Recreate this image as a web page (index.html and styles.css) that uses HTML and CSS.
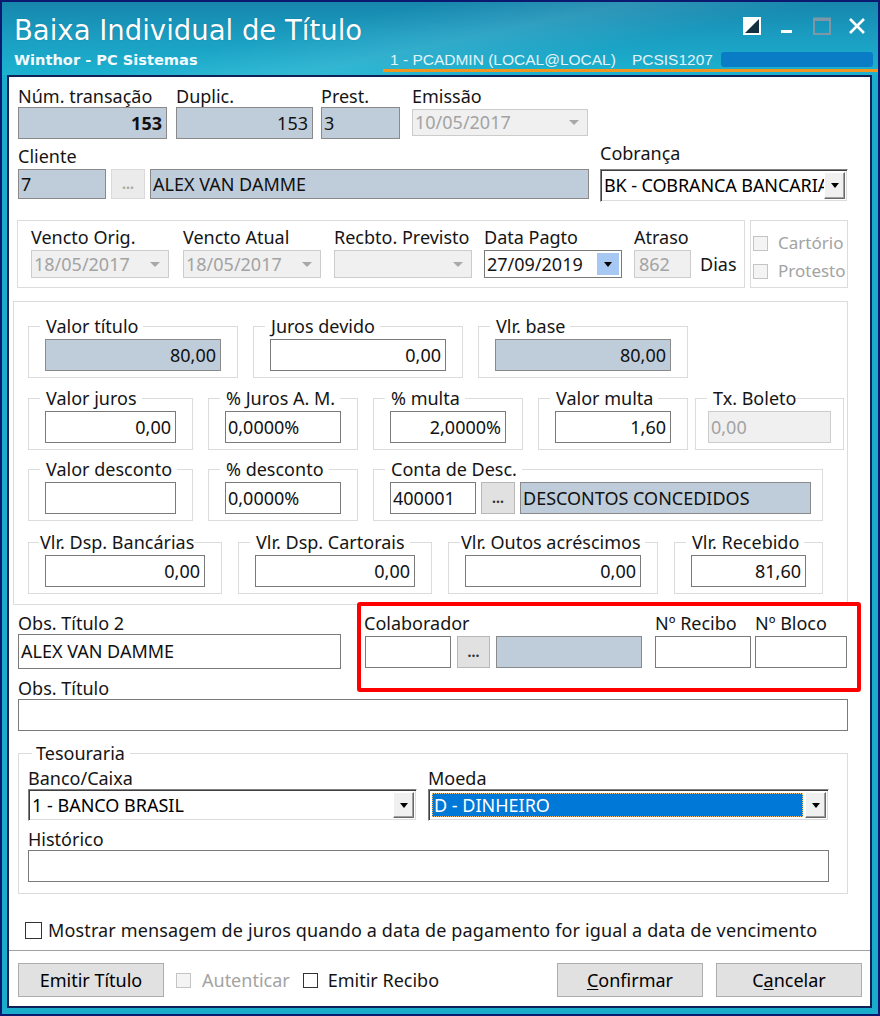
FILE: index.html
```html
<!DOCTYPE html>
<html lang="pt-BR">
<head>
<meta charset="utf-8">
<title>Baixa Individual de Título</title>
<link rel="stylesheet" href="styles.css">
</head>
<body>
<div class="win">
  <div class="titlebar">
    <div class="tb-left">
      <div class="tb-title">Baixa Individual de Título</div>
      <div class="tb-sub">Winthor - PC Sistemas</div>
    </div>
    <div class="tb-right">
      <div class="tb-icons">
        <svg class="ic" width="18" height="18" viewBox="0 0 18 18"><rect x="1" y="1" width="16" height="16" fill="#14303f" stroke="#fff" stroke-width="2"/><polygon points="1,1 17,1 1,17" fill="#fff"/></svg>
        <svg class="ic" width="18" height="18" viewBox="0 0 18 18"><rect x="3" y="13" width="11" height="3" fill="#fff"/></svg>
        <svg class="ic" width="18" height="18" viewBox="0 0 18 18"><rect x="1" y="1.5" width="16" height="15.5" fill="none" stroke="#7d97a6" stroke-width="2"/><rect x="1" y="1" width="16" height="3" fill="#7d97a6"/></svg>
        <svg class="ic" width="18" height="18" viewBox="0 0 18 18"><path d="M2 2 L16 16 M16 2 L2 16" stroke="#fff" stroke-width="2.6" fill="none"/></svg>
      </div>
      <div class="tb-user">
        <span class="u1">1 - PCADMIN (LOCAL@LOCAL)</span>
        <span class="u2">PCSIS1207</span>
        <span class="ubar"></span>
      </div>
    </div>
  </div>

  <div class="client">
    <div class="main">
      <div class="row r1">
        <div class="col f-trans"><div class="lbl">Núm. transação</div><div class="box ro rt bold">153</div></div>
        <div class="col f-dup"><div class="lbl">Duplic.</div><div class="box ro rt">153</div></div>
        <div class="col f-prest"><div class="lbl">Prest.</div><div class="box ro pl">3</div></div>
        <div class="col f-emis"><div class="lbl">Emissão</div><div class="cb dis emis"><span class="v">10/05/2017</span><span class="dd"><i class="arr g"></i></span></div></div>
      </div>

      <div class="row r2">
        <div class="col f-cli">
          <div class="lbl">Cliente</div>
          <div class="row cli-row">
            <div class="box ro cli-cod pl">7</div>
            <div class="dots dis cli-btn">...</div>
            <div class="box ro cli-nome pl">ALEX VAN DAMME</div>
          </div>
        </div>
        <div class="col f-cob">
          <div class="lbl">Cobrança</div>
          <div class="ccombo cob"><span class="v">BK - COBRANCA BANCARIA</span><span class="cbtn"><i class="arr"></i></span></div>
        </div>
      </div>

      <div class="row r3">
        <div class="vbox">
          <div class="col f-d1"><div class="lbl">Vencto Orig.</div><div class="cb dis"><span class="v">18/05/2017</span><span class="dd"><i class="arr g"></i></span></div></div>
          <div class="col f-d2"><div class="lbl">Vencto Atual</div><div class="cb dis"><span class="v">18/05/2017</span><span class="dd"><i class="arr g"></i></span></div></div>
          <div class="col f-d3"><div class="lbl">Recbto. Previsto</div><div class="cb dis"><span class="v"></span><span class="dd"><i class="arr g"></i></span></div></div>
          <div class="col f-d4"><div class="lbl">Data Pagto</div><div class="cb act"><span class="v">27/09/2019</span><span class="dd hot"><i class="arr"></i></span></div></div>
          <div class="col f-atr"><div class="lbl">Atraso</div><div class="box dis atr">862</div></div>
          <div class="dias">Dias</div>
        </div>
        <div class="ckbox">
          <div class="ck dis"><span class="sq"></span>Cartório</div>
          <div class="ck dis"><span class="sq"></span>Protesto</div>
        </div>
      </div>

      <div class="vals">
        <div class="row ga">
          <fieldset class="gb w210"><legend>Valor título</legend><div class="box ro rt">80,00</div></fieldset>
          <fieldset class="gb w210"><legend>Juros devido</legend><div class="box rt">0,00</div></fieldset>
          <fieldset class="gb w210"><legend>Vlr. base</legend><div class="box ro rt">80,00</div></fieldset>
        </div>
        <div class="row gbr">
          <fieldset class="gb w165"><legend>Valor juros</legend><div class="box rt">0,00</div></fieldset>
          <fieldset class="gb w150"><legend>% Juros A. M.</legend><div class="box pl">0,0000%</div></fieldset>
          <fieldset class="gb w150"><legend>% multa</legend><div class="box rt">2,0000%</div></fieldset>
          <fieldset class="gb w150"><legend>Valor multa</legend><div class="box rt">1,60</div></fieldset>
          <fieldset class="gb w149 tx"><legend>Tx. Boleto</legend><div class="box dis pl">0,00</div></fieldset>
        </div>
        <div class="row gc">
          <fieldset class="gb w165"><legend>Valor desconto</legend><div class="box"></div></fieldset>
          <fieldset class="gb w150"><legend>% desconto</legend><div class="box pl">0,0000%</div></fieldset>
          <fieldset class="gb w450 conta"><legend>Conta de Desc.</legend>
            <div class="row">
              <div class="box pl conta-cod">400001</div>
              <div class="dots conta-btn">...</div>
              <div class="box ro pl conta-nome">DESCONTOS CONCEDIDOS</div>
            </div>
          </fieldset>
        </div>
        <div class="row gd">
          <fieldset class="gb w194 lg-tight"><legend>Vlr. Dsp. Bancárias</legend><div class="box rt">0,00</div></fieldset>
          <fieldset class="gb w194"><legend>Vlr. Dsp. Cartorais</legend><div class="box rt">0,00</div></fieldset>
          <fieldset class="gb w210 lg-out"><legend>Vlr. Outos acréscimos</legend><div class="box rt">0,00</div></fieldset>
          <fieldset class="gb w149"><legend>Vlr. Recebido</legend><div class="box rt">81,60</div></fieldset>
        </div>
      </div>

      <div class="row r-obs">
        <div class="col f-obs2">
          <div class="lbl">Obs. Título 2</div>
          <div class="box pl obs2">ALEX VAN DAMME</div>
        </div>
        <div class="col f-colab">
          <div class="lbl">Colaborador</div>
          <div class="row colab-row">
            <div class="box colab-cod"></div>
            <div class="dots colab-btn">...</div>
            <div class="box ro colab-nome"></div>
          </div>
        </div>
        <div class="col f-rec"><div class="lbl">Nº Recibo</div><div class="box"></div></div>
        <div class="col f-blo"><div class="lbl">Nº Bloco</div><div class="box"></div></div>
      </div>

      <div class="col f-obs">
        <div class="lbl">Obs. Título</div>
        <div class="box"></div>
      </div>

      <fieldset class="tes">
        <legend>Tesouraria</legend>
        <div class="row tes-row">
          <div class="col f-banco">
            <div class="lbl l21">Banco/Caixa</div>
            <div class="ccombo"><span class="v">1 - BANCO BRASIL</span><span class="cbtn"><i class="arr"></i></span></div>
          </div>
          <div class="col f-moeda">
            <div class="lbl l21">Moeda</div>
            <div class="ccombo"><span class="v sel">D - DINHEIRO</span><span class="cbtn"><i class="arr"></i></span></div>
          </div>
        </div>
        <div class="lbl hist-lbl">Histórico</div>
        <div class="box hist"></div>
      </fieldset>

      <div class="ck msg"><span class="sq"></span>Mostrar mensagem de juros quando a data de pagamento for igual a data de vencimento</div>
    </div>

    <div class="footer">
      <div class="btn">Emitir Título</div>
      <div class="ck dis auth"><span class="sq"></span>Autenticar</div>
      <div class="ck rec"><span class="sq"></span>Emitir Recibo</div>
      <div class="btn confirm"><u>C</u>onfirmar</div>
      <div class="btn cancel">C<u>a</u>ncelar</div>
    </div>

    <div class="highlight"></div>
  </div>
</div>
</body>
</html>
```

FILE: styles.css
```css
* { box-sizing: border-box; }
html, body { margin: 0; padding: 0; }
body {
  width: 880px;
  height: 1016px;
  overflow: hidden;
  background: #0b1a70;
  font-family: "Noto Sans", "DejaVu Sans", sans-serif;
  font-size: 18px;
  color: #151515;
}

.win {
  width: 880px;
  height: 1016px;
  border: 2px solid #0b1a70;
  background: #1aaccb;
  display: flex;
  flex-direction: column;
}

/* ---------- title bar ---------- */
.titlebar {
  height: 73px;
  flex: none;
  display: flex;
  justify-content: space-between;
  background:
    linear-gradient(168deg, rgba(255,255,255,0) 35%, rgba(255,255,255,0.10) 52%, rgba(255,255,255,0) 68%),
    linear-gradient(180deg, #1786ad 0%, #1a9cc0 45%, #1cb2d0 100%);
}
.tb-left { padding: 12px 0 0 12px; }
.tb-title {
  font-family: "DejaVu Sans", sans-serif;
  font-size: 27.5px;
  line-height: 32px;
  color: #fff;
  white-space: nowrap;
  text-shadow: 0 0 1px rgba(0,40,70,0.4);
}
.tb-sub {
  margin-top: 5px;
  font-family: "DejaVu Sans", sans-serif;
  font-weight: bold;
  font-size: 14.6px;
  line-height: 17px;
  color: #f2fbff;
  white-space: nowrap;
}
.tb-right {
  width: 495px;
  display: flex;
  flex-direction: column;
}
.tb-icons {
  display: flex;
  justify-content: flex-end;
  gap: 17px;
  padding: 15px 12px 0 0;
}
.ic { display: block; }
.tb-user {
  margin-top: auto;
  margin-bottom: 3px;
  height: 22px;
  padding: 0 5px 0 7px;
  border-bottom: 3px solid #f0961e;
  display: flex;
  align-items: center;
  font-family: "Liberation Sans", Arial, sans-serif;
  font-size: 15.5px;
  color: #e3f3f9;
  white-space: nowrap;
}
.u2 { margin-left: 16px; }
.ubar {
  margin-left: 8px;
  flex: 1;
  height: 15px;
  border-radius: 3px;
  background: #0a7cc6;
}

/* ---------- client ---------- */
.client {
  flex: 1;
  margin: 0 6px 6px 5px;
  border: 2px solid #0e2258;
  background: #fff;
  position: relative;
  display: flex;
  flex-direction: column;
}
.main {
  flex: 1;
  padding: 8px 0 0 9px;
}

.row { display: flex; align-items: flex-start; }
.col { display: flex; flex-direction: column; }
.lbl { height: 22px; line-height: 22px; white-space: nowrap; }
.l21 { height: 21px; line-height: 21px; }

.box {
  height: 32px;
  border: 1px solid #7a7a7a;
  background: #fff;
  padding: 0 4px;
  line-height: 30px;
  white-space: nowrap;
  overflow: hidden;
  color: #111;
}
.ro { background: #bfccd9; border-color: #8a8a8a; }
.rt { text-align: right; }
.pl { padding-left: 2px; }
.bold { font-weight: bold; }
.box.dis { background: #f0f0f0; border-color: #cccccc; color: #a3a3a3; }

/* win10 style combo */
.cb {
  height: 28px;
  border: 1px solid #7a7a7a;
  background: #fff;
  display: flex;
  align-items: stretch;
  line-height: 26px;
  white-space: nowrap;
}
.cb .v { flex: 1; padding-left: 2px; overflow: hidden; }
.cb .dd { width: 22px; display: flex; align-items: center; justify-content: center; margin: 2px 2px 2px 0; }
.cb.dis { background: #f0f0f0; border-color: #cccccc; color: #a3a3a3; }
.dd.hot { background: #a6c8f2; }

.arr {
  display: block;
  width: 0; height: 0;
  border-left: 4px solid transparent;
  border-right: 4px solid transparent;
  border-top: 5px solid #000;
}
.arr.g { border-left-width: 5px; border-right-width: 5px; border-top-color: #a8a8a8; }

/* classic combo */
.ccombo {
  height: 32px;
  background: #fff;
  border: 1px solid;
  border-color: #808080 #fff #fff #808080;
  box-shadow: inset 1px 1px 0 #404040, inset -1px -1px 0 #dcdcdc;
  padding: 2px;
  display: flex;
  line-height: 26px;
  white-space: nowrap;
}
.ccombo .v { flex: 1; overflow: hidden; padding-left: 1px; color: #000; }
.ccombo .v.sel {
  background: #0078d7;
  color: #fff;
  outline: 1px dotted #f3c27a;
  outline-offset: -1px;
  margin: 1px 2px 1px 1px;
  line-height: 24px;
  padding-left: 2px;
}
.cob .v { letter-spacing: -0.1px; }
.cbtn {
  width: 21px;
  flex: none;
  background: #f0f0f0;
  border: 1px solid;
  border-color: #fff #696969 #696969 #fff;
  box-shadow: inset -1px -1px 0 #a0a0a0;
  display: flex;
  align-items: center;
  justify-content: center;
}
.cbtn .arr { border-left-width: 4px; border-right-width: 4px; border-top-width: 5px; }

.dots {
  height: 32px;
  border: 1px solid #b8b8b8;
  background: #e1e1e1;
  text-align: center;
  line-height: 30px;
  font-weight: bold;
  font-size: 14px;
  color: #333;
}
.dots.dis { background: #ebebeb; border-color: #dadada; color: #a8a8a8; }

/* row 1 */
.r1 .f-trans { width: 149px; margin-right: 9px; }
.r1 .f-dup { width: 137px; margin-right: 8px; }
.r1 .f-prest { width: 79px; margin-right: 12px; }
.r1 .f-emis { width: 176px; }
.emis { margin-top: 2px; height: 27px; line-height: 25px; }

/* row 2 */
.r2 { margin-top: 6px; }
.cli-row { margin-top: 2px; }
.cli-row .box, .cli-row .dots { height: 30px; line-height: 28px; }
.cli-cod { width: 88px; }
.cli-btn { width: 34px; margin-left: 5px; }
.cli-nome { width: 439px; margin-left: 5px; }
.f-cob { width: 248px; margin-left: 11px; margin-top: -3px; }
.cob { margin-top: 5px; height: 33px; }

/* row 3 : dates */
.r3 { margin-top: 18px; margin-left: -1px; }
.vbox {
  width: 728px;
  height: 68px;
  border: 1px solid #dcdcdc;
  padding: 5px 0 0 13px;
  display: flex;
  align-items: flex-start;
}
.vbox .cb { margin-top: 2px; }
.f-d1, .f-d2, .f-d3, .f-d4 { width: 138px; }
.f-d1 { margin-right: 14px; }
.f-d2 { margin-right: 13px; }
.f-d3 { margin-right: 12px; }
.f-d4 { margin-right: 12px; }
.f-atr { width: 57px; }
.atr { margin-top: 2px; height: 28px; line-height: 26px; }
.dias { margin: 24px 0 0 9px; line-height: 28px; }

.ckbox {
  width: 98px;
  height: 68px;
  margin-left: 5px;
  border: 1px solid #dcdcdc;
  padding: 11px 0 0 2px;
  overflow: hidden;
}
.ck {
  display: flex;
  align-items: center;
  height: 22px;
  line-height: 22px;
  white-space: nowrap;
}
.ck .sq {
  width: 15px;
  height: 15px;
  flex: none;
  border: 1px solid #333;
  background: #fff;
  margin-right: 10px;
}
.ck.dis { color: #a3a3a3; }
.ck.dis .sq { border-color: #c4c4c4; background: #f4f4f4; }
.ckbox .ck { font-size: 17px; }
.ckbox .ck + .ck { margin-top: 6px; }

/* values group */
.vals {
  margin-top: 13px;
  margin-left: -5px;
  width: 835px;
  border: 1px solid #dcdcdc;
  padding: 13px 0 10px 14px;
}
.gb {
  margin: 0;
  min-width: 0;
  border: 1px solid #dcdcdc;
  padding: 2px 16px 6px 16px;
  flex: none;
}
.gb legend {
  padding: 0 5px 0 6px;
  margin-left: -5px;
  line-height: 22px;
  height: 22px;
  white-space: nowrap;
}
.w210 { width: 210px; }
.w165 { width: 165px; }
.w150 { width: 150px; }
.w149 { width: 149px; }
.w194 { width: 194px; }
.w450 { width: 450px; }
.ga, .gc { gap: 15px; }
.gbr { margin-top: 9px; gap: 15px; }
.gbr .tx { margin-left: -8px; padding: 2px 12px 6px 12px; }
.tx legend { margin-left: -1px; padding-right: 0; }
.gc { margin-top: 8px; }
.gd { margin-top: 10px; gap: 16px; }
.lg-tight legend { margin-left: -6px; padding: 0 0 0 1px; }
.lg-out legend { margin-left: -5px; padding: 0 4px 0 1px; }
.conta { padding-right: 11px; }
.conta-cod { width: 86px; }
.conta-btn { width: 34px; margin-left: 5px; }
.conta-nome { width: 291px; margin-left: 5px; }

/* obs row */
.r-obs { margin-top: 7px; }
.f-obs2 { width: 323px; }
.obs2 { height: 35px; line-height: 33px; }
.f-colab { margin-left: 24px; }
.colab-row { margin-top: 2px; }
.colab-cod { width: 86px; }
.colab-btn { width: 33px; margin-left: 6px; }
.colab-nome { width: 146px; margin-left: 6px; }
.f-colab .lbl { margin-left: -1px; }
.f-rec { width: 96px; margin-left: 13px; }
.f-blo { width: 92px; margin-left: 4px; }
.f-rec .box, .f-blo .box { margin-top: 2px; }

.f-obs { margin-top: 8px; width: 830px; }

/* tesouraria */
.tes {
  margin: 11px 0 0 0;
  width: 830px;
  min-width: 0;
  border: 1px solid #dcdcdc;
  padding: 4px 18px 11px 9px;
}
.tes legend {
  margin-left: 4px;
  padding: 0 5px 0 4px;
  line-height: 22px;
  height: 22px;
}
.tes-row { gap: 11px; }
.f-banco { width: 389px; }
.f-moeda { width: 401px; }
.hist-lbl { margin-top: 7px; }
.hist { width: 801px; }

.msg { margin: 25px 0 0 7px; letter-spacing: 0.14px; }
.msg .sq { width: 17px; height: 17px; margin-right: 6px; }

/* footer */
.footer {
  height: 56px;
  flex: none;
  border-top: 1px solid #a0a0a0;
  padding: 12px 8px 0 9px;
  display: flex;
  align-items: flex-start;
}
.btn {
  width: 146px;
  height: 34px;
  background: #e1e1e1;
  border: 1px solid #adadad;
  text-align: center;
  line-height: 32px;
  color: #000;
  white-space: nowrap;
}
.btn u { text-decoration-thickness: 1px; text-underline-offset: 2px; }
.footer .ck { height: 34px; }
.auth { margin-left: 12px; }
.auth .sq { margin-right: 11px; }
.rec { margin-left: 13px; }
.rec .sq { margin-right: 10px; }
.confirm { margin-left: auto; }
.cancel { margin-left: 13px; }

/* annotation */
.highlight {
  position: absolute;
  left: 348px;
  top: 525px;
  width: 504px;
  height: 90px;
  border: 4px solid #ff0000;
  border-radius: 3px;
  pointer-events: none;
}
```
